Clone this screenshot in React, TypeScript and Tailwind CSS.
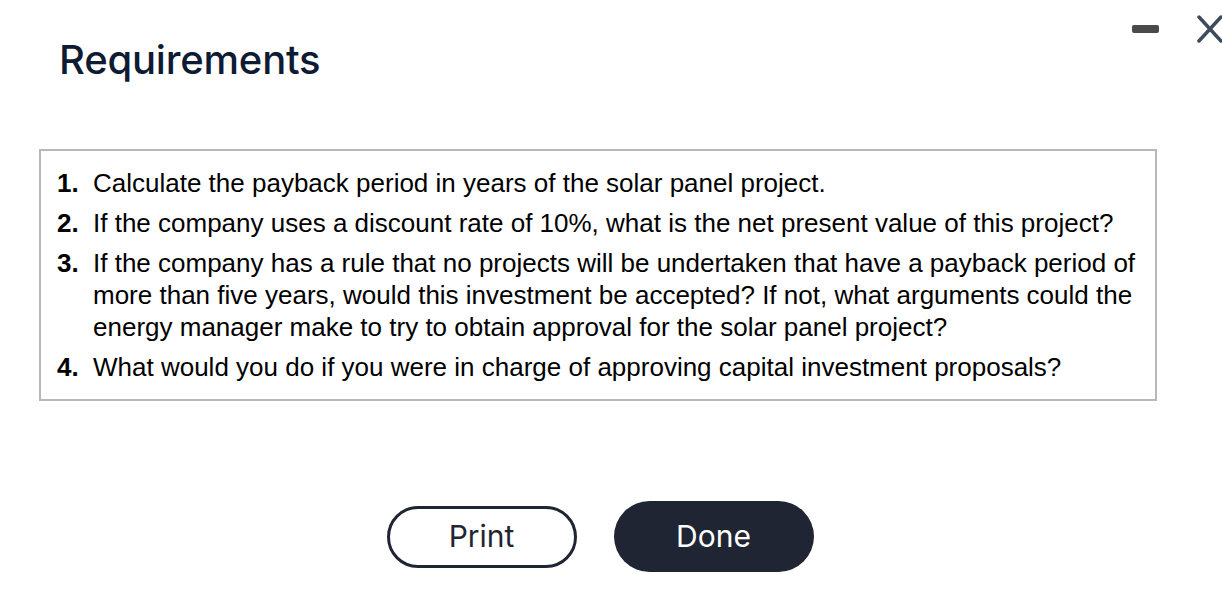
import React from "react";

const items: string[] = [
  "Calculate the payback period in years of the solar panel project.",
  "If the company uses a discount rate of 10%, what is the net present value of this project?",
  "If the company has a rule that no projects will be undertaken that have a payback period of more than five years, would this investment be accepted? If not, what arguments could the energy manager make to try to obtain approval for the solar panel project?",
  "What would you do if you were in charge of approving capital investment proposals?",
];

export default function App() {
  return (
    <div className="relative h-[590px] w-[1222px] overflow-hidden bg-white font-['Liberation_Sans',Arial,sans-serif]">
      <div className="absolute right-0 top-[15px] flex items-center gap-[38px]">
        <span className="block h-[8px] w-[27px] rounded-[2px] bg-[#4a4a4a]" />
        <svg width="26" height="28" viewBox="0 0 26 28" className="mr-[-1px]">
          <path d="M2 2 L24 26 M24 2 L2 26" stroke="#3d4b5c" strokeWidth="3.5" strokeLinecap="round" />
        </svg>
      </div>

      <div className="pl-[39px] pt-[38px]">
        <h1 className="ml-[20px] text-[40px] font-medium leading-[44px] tracking-[-0.2px] text-[#0f1a33] font-['Inter','Liberation_Sans',sans-serif]">
          Requirements
        </h1>

        <div className="mt-[67px] w-[1118px] border-2 border-[#b8b8b8] pb-[16px] pl-[16px] pr-[16px] pt-[16px]">
          <ol className="flex flex-col gap-[8px] text-[26px] leading-[32px] text-black">
            {items.map((t, i) => (
              <li key={i} className="flex">
                <span className="w-[36px] shrink-0 font-bold">{i + 1}.</span>
                <span>{t}</span>
              </li>
            ))}
          </ol>
        </div>

        <div className="mt-[100px] flex w-[1118px] items-center justify-center gap-[37px] pl-[4px]">
          <button className="h-[62px] w-[190px] rounded-full border-[3px] border-[#1f2533] bg-white text-[30px] text-[#1f2533] font-['Inter','Liberation_Sans',sans-serif]">
            Print
          </button>
          <button className="h-[71px] w-[200px] rounded-full bg-[#1f2533] text-[30px] text-white font-['Inter','Liberation_Sans',sans-serif]">
            Done
          </button>
        </div>
      </div>
    </div>
  );
}
